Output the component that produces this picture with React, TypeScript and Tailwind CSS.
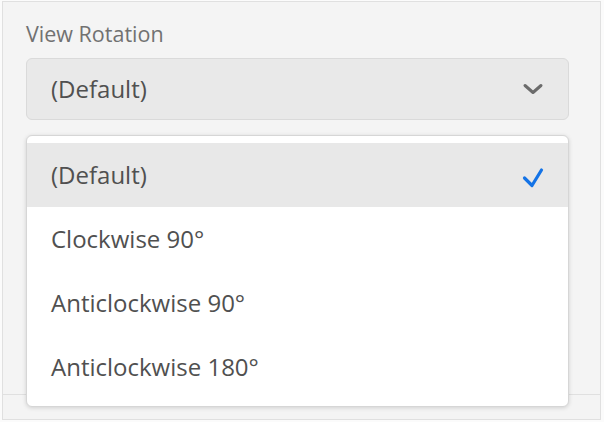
import React from 'react';

const options = ['(Default)', 'Clockwise 90°', 'Anticlockwise 90°', 'Anticlockwise 180°'];

export default function App() {
  const selected = 0;

  return (
    <div
      className="w-[604px] h-[422px] bg-[#fbfbfb] pt-[1px] pl-[2px] pr-[3px] pb-[2px]"
      style={{ fontFamily: '"Open Sans", "Noto Sans", sans-serif' }}
    >
      <div className="h-full border border-[#e0e0e0] bg-[#f4f4f4] flex flex-col">
        <div className="h-[393px] border-b border-[#e0e0e0] pl-[23px] pr-[31px] pt-[18px]">
          <div className="text-[21.5px] leading-[28px] text-[#717171]">View Rotation</div>

          <div className="relative mt-[10px]">
            {/* Select trigger */}
            <div className="h-[62px] rounded-[6px] border border-[#dadada] bg-[#e9e9e9] flex items-center justify-between pl-[24px] pr-[24px]">
              <span className="text-[24px] text-[#505050]">{options[selected]}</span>
              <svg width="22" height="12" viewBox="0 0 22 12" fill="none">
                <path d="M3 2.5 L11 9.5 L19 2.5" stroke="#6b6b6b" strokeWidth="3" strokeLinecap="round" strokeLinejoin="round" />
              </svg>
            </div>

            {/* Menu */}
            <div className="absolute left-0 right-0 top-[77px] rounded-[6px] border border-[#d6d6d6] bg-white py-[7px] shadow-[0_1px_4px_rgba(0,0,0,0.15)]">
              {options.map((opt, i) => (
                <div
                  key={opt}
                  className={`h-[64px] flex items-center justify-between pl-[24px] pr-[24px] ${
                    i === selected ? 'bg-[#e8e8e8]' : ''
                  }`}
                >
                  <span className="text-[24px] text-[#505050]">{opt}</span>
                  {i === selected && (
                    <svg width="22" height="22" viewBox="0 0 22 22" fill="none" className="mt-[5px]">
                      <path d="M2.5 11 L10 18.5 L19.5 3" stroke="#1473e6" strokeWidth="3.2" strokeLinecap="round" strokeLinejoin="round" />
                    </svg>
                  )}
                </div>
              ))}
            </div>
          </div>
        </div>
      </div>
    </div>
  );
}
